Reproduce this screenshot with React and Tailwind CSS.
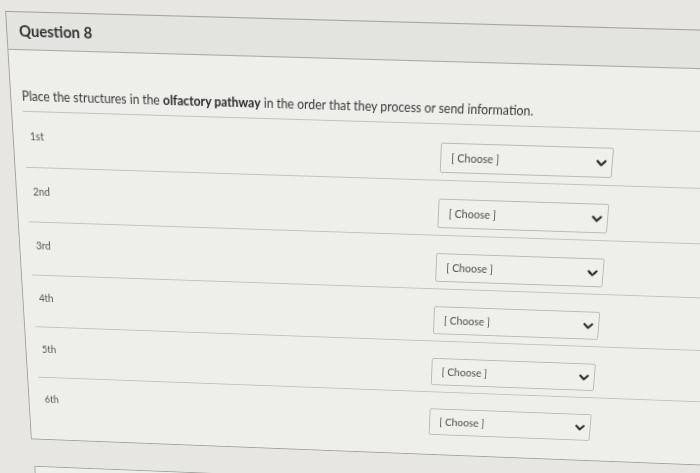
import React from 'react';

// The reference is a photo of a screen, taken at an angle. The page is laid out
// flat, then a homography (least squares over a few measured points) maps the
// flat layout onto where the photo has it.
const solve = (A, b) => {
  const n = b.length;
  for (let c = 0; c < n; c++) {
    let p = c;
    for (let r = c + 1; r < n; r++) if (Math.abs(A[r][c]) > Math.abs(A[p][c])) p = r;
    [A[c], A[p]] = [A[p], A[c]];
    [b[c], b[p]] = [b[p], b[c]];
    for (let r = 0; r < n; r++) {
      if (r === c) continue;
      const f = A[r][c] / A[c][c];
      for (let k = c; k < n; k++) A[r][k] -= f * A[c][k];
      b[r] -= f * b[c];
    }
  }
  return b.map((v, i) => v / A[i][i]);
};

const homography = (pairs) => {
  const rows = [];
  const rhs = [];
  pairs.forEach(([[X, Y], [U, V]]) => {
    const x = X / 100, y = Y / 100, u = U / 100, v = V / 100;
    rows.push([x, y, 1, 0, 0, 0, -u * x, -u * y]);
    rhs.push(u);
    rows.push([0, 0, 0, x, y, 1, -v * x, -v * y]);
    rhs.push(v);
  });
  const N = Array.from({ length: 8 }, (_, i) =>
    Array.from({ length: 8 }, (_, j) => rows.reduce((s, r) => s + r[i] * r[j], 0))
  );
  const r = Array.from({ length: 8 }, (_, i) => rows.reduce((s, row, k) => s + row[i] * rhs[k], 0));
  const h = solve(N, r);
  const m = [h[0], h[1], h[2] * 100, h[3], h[4], h[5] * 100, h[6] / 100, h[7] / 100];
  return `matrix3d(${m[0]},${m[3]},0,${m[6]},${m[1]},${m[4]},0,${m[7]},0,0,1,0,${m[2]},${m[5]},0,1)`;
};

// flat point -> point in the photo
const photoTransform = homography([
  [[4, 12], [4, 12]],
  [[700, 12], [700, 25]],
  [[4, 459], [30, 435]],
  [[744, 459], [700, 465]],
  [[442, 124], [442, 143]],
  [[614, 124], [614, 145]],
  [[442, 404], [426, 409]],
  [[614, 434], [586, 437]],
]);

const slots = ['1st', '2nd', '3rd', '4th', '5th', '6th'];

const Chevron = () => (
  <svg width="11" height="7" viewBox="0 0 11 7" className="shrink-0">
    <polyline points="1.5,1.5 5.5,5.5 9.5,1.5" fill="none" stroke="#2f2f2f" strokeWidth="2.4" strokeLinecap="round" strokeLinejoin="round" />
  </svg>
);

const ChooseSelect = () => (
  <div className="w-[175px] h-[30px] flex items-center justify-between pl-[10px] pr-[5px] border border-[#b9b9b5] rounded-[2px] bg-[#efefec]">
    <span className="text-[11px] text-[#4d4d4d]">[ Choose ]</span>
    <Chevron />
  </div>
);

const App = () => {
  return (
    <div className="w-[700px] h-[473px] overflow-hidden bg-[#e7e6e2]">
      <div
        className="w-[880px] h-[560px] origin-top-left bg-[#e7e6e2] pt-[12px] pl-[4px] font-[Lato,sans-serif]"
        style={{ transform: photoTransform }}
      >
        <div className="w-[840px] border border-[#a3a39f] bg-[#eeeeeb]">
          <div className="h-[36px] flex items-center pl-[12px] bg-[#e3e3e0] border-b border-[#a9a9a5]">
            <h2 className="text-[15px] font-bold text-[#333333]">Question 8</h2>
          </div>

          <div className="px-[11px]">
            <div className="pt-[36px] pb-[5px] border-b border-[#c2c2be]">
              <p className="text-[12.4px] leading-[18px] text-[#3a3a3a]">
                Place the structures in the <strong className="font-bold text-[#2a2a2a]">olfactory pathway</strong> in the order that they process or send information.
              </p>
            </div>

            {slots.map((slot, i) => (
              <div
                key={slot}
                className={
                  i < slots.length - 1
                    ? 'h-[56px] flex items-start border-b border-[#c2c2be]'
                    : 'h-[70px] flex items-start'
                }
              >
                <div className="w-[429px] pt-[17px] pl-[6px] text-[10.5px] leading-[14px] text-[#555555]">{slot}</div>
                <div className="mt-[18px]">
                  <ChooseSelect />
                </div>
              </div>
            ))}
          </div>
        </div>

        <div className="mt-[31px] ml-[2px] w-[840px] h-[40px] border-t border-l border-[#a3a39f] bg-[#eeeeeb]" />
      </div>
    </div>
  );
};

export default App;
